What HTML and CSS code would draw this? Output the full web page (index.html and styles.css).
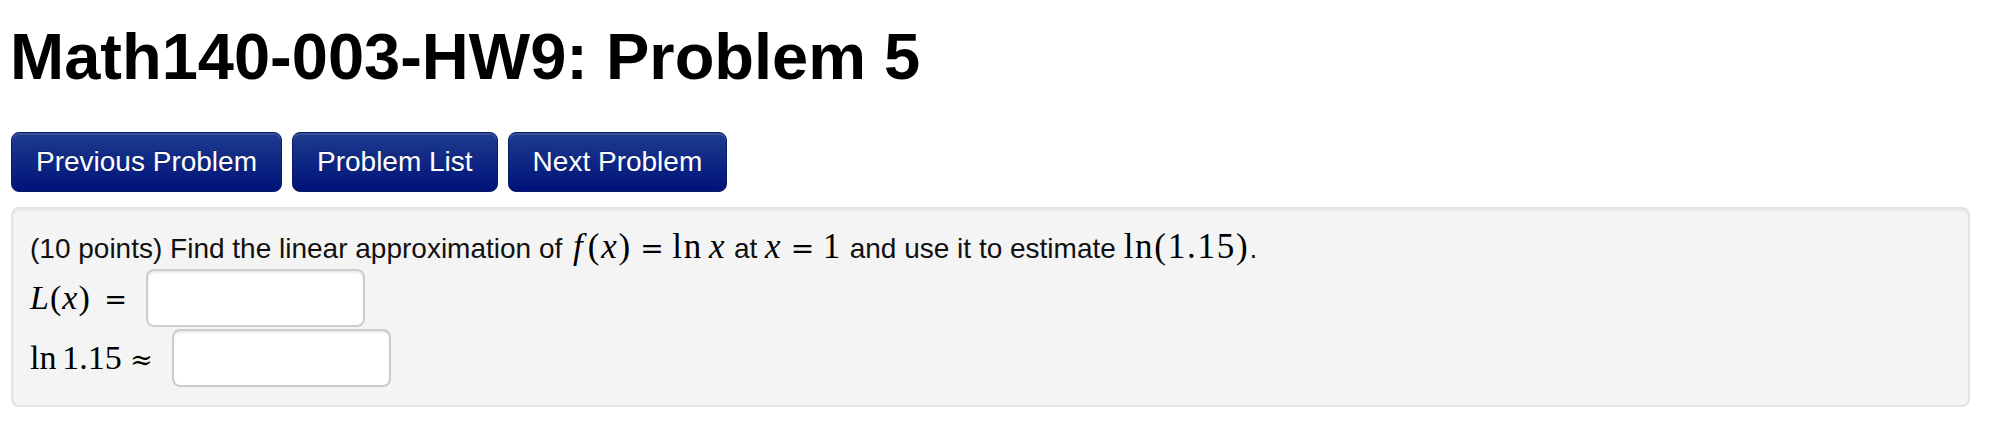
FILE: index.html
```html
<!DOCTYPE html>
<html lang="en">
<head>
<meta charset="utf-8">
<title>Math140-003-HW9: Problem 5</title>
<link rel="stylesheet" href="styles.css">
</head>
<body>
<div class="page">
  <h1 class="title">Math140-003-HW9: Problem 5</h1>
  <div class="nav">
    <a class="btn" href="#">Previous Problem</a>
    <a class="btn" href="#">Problem List</a>
    <a class="btn" href="#">Next Problem</a>
  </div>
  <div class="well">
    <div class="line">(10 points) Find the linear approximation of <span class="m"><i class="f">f</i>(<i>x</i>)<span class="rel">=</span>ln<span class="thin"></span><i>x</i></span> at <span class="m"><i>x</i><span class="rel">=</span>1</span> and use it to estimate <span class="m">ln(1.15)</span>.</div>
    <div class="row row-l"><span class="m"><i>L</i>(<i>x</i>)<span class="rel">=</span></span><input class="answer" type="text" aria-label="L(x)"></div>
    <div class="row row-ln"><span class="m">ln<span class="thin"></span>1.15<span class="rel">≈</span></span><input class="answer" type="text" aria-label="ln 1.15"></div>
  </div>
</div>
</body>
</html>
```

FILE: styles.css
```css
html, body {
  margin: 0;
  padding: 0;
  background: #ffffff;
}

.page {
  padding: 22px 36px 0 11px;
}

.title {
  margin: 0 0 0 -1px;
  font-family: "Liberation Sans", Arial, sans-serif;
  font-weight: bold;
  font-size: 65px;
  line-height: 70px;
  color: #000;
}

.nav {
  display: flex;
  gap: 10px;
  margin-top: 40px;
}

.btn {
  display: flex;
  align-items: center;
  box-sizing: border-box;
  height: 60px;
  padding: 0 24px;
  border: 1px solid #0a1a66;
  border-radius: 8px;
  background: linear-gradient(to bottom, #1d3c8e, #00127a);
  box-shadow: inset 0 2px 0 rgba(255, 255, 255, 0.12);
  color: #fff;
  text-decoration: none;
  text-shadow: 0 -1px 0 rgba(0, 0, 0, 0.25);
  font-family: "Liberation Sans", Arial, sans-serif;
  font-size: 28px;
}

.well {
  margin-top: 15px;
  border: 2px solid #e3e3e3;
  border-radius: 8px;
  background: #f4f4f4;
  box-shadow: inset 0 2px 2px rgba(0, 0, 0, 0.05);
  padding: 18px 16px 17px 17px;
  font-family: "Liberation Sans", Arial, sans-serif;
  font-size: 28px;
  color: #111;
}

.line {
  line-height: 39px;
}

.m {
  font-family: "Liberation Serif", "Times New Roman", serif;
  font-size: 35px;
  letter-spacing: 0.05em;
  color: #000;
}

.m i {
  font-style: italic;
}

.m i.f {
  padding: 0 0.1em 0 0.08em;
}

.rel {
  font-family: "DejaVu Serif", serif;
  font-size: 0.8em;
  letter-spacing: 0;
  margin: 0 0.3em;
}

.thin {
  display: inline-block;
  width: 0.17em;
}

.row {
  display: flex;
  align-items: center;
  height: 60px;
}

.row .m {
  font-size: 34px;
  letter-spacing: 0.03em;
}

.row .rel {
  margin-right: 0;
}

.row-l .rel {
  margin-left: 0.5em;
}

.row-ln .m {
  letter-spacing: 0;
}

.row-ln .rel {
  margin-left: 0.3em;
}

.answer {
  box-sizing: border-box;
  width: 219px;
  height: 58px;
  margin: 0 0 0 19px;
  border: 2px solid #cccccc;
  border-radius: 8px;
  background: #fff;
  box-shadow: inset 0 2px 2px rgba(0, 0, 0, 0.075);
  font-family: "Liberation Sans", Arial, sans-serif;
  font-size: 28px;
  padding: 4px 12px;
}
```
